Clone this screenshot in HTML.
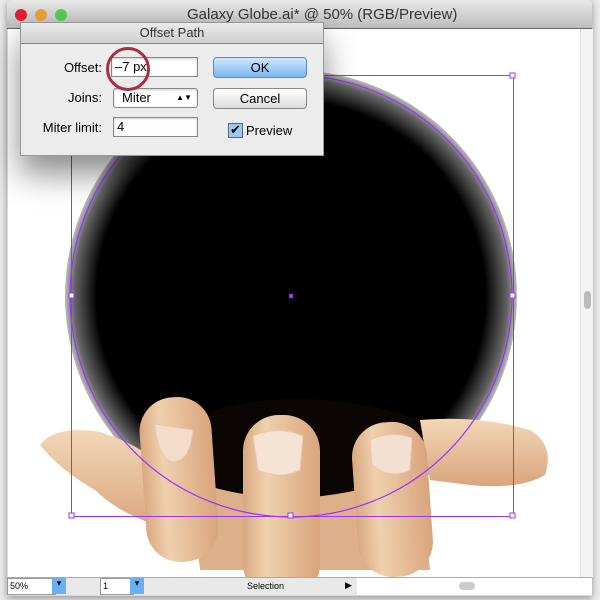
<!DOCTYPE html>
<html><head><style>
body{margin:0;width:600px;height:600px;background:#ececec;position:relative;overflow:hidden;font-family:"Liberation Sans",sans-serif}
.win{position:absolute;left:7px;top:0;width:585px;height:596px;background:#d8d8d8;box-shadow:0 2px 8px rgba(0,0,0,.4);border-radius:4px 4px 0 0}
.tb{position:absolute;left:0;top:0;width:585px;height:28px;background:linear-gradient(#e8e8e8,#bdbdbd);border-radius:4px 4px 0 0;border-bottom:1px solid #666}
.dot{position:absolute;top:9px;width:12px;height:12px;border-radius:50%}
.tt{position:absolute;left:180px;top:6px;font-size:15px;color:#333}
.canvas{position:absolute;left:8px;top:29px;width:572px;height:548px;background:#fff;overflow:hidden}
.sb{position:absolute;left:580px;top:29px;width:12px;height:548px;background:#f4f4f4;border-left:1px solid #ddd}
.status{position:absolute;left:7px;top:577px;width:585px;height:17px;background:#e8e8e8;border-top:1px solid #aaa;font-size:9px}
.dlg{position:absolute;left:20px;top:22px;width:302px;height:132px;background:#ececec;box-shadow:0 18px 30px rgba(0,0,0,.45);border:1px solid #999}
.dt{height:20px;background:linear-gradient(#eaeaea,#cfcfcf);border-bottom:1px solid #888;text-align:center;font-size:13px;line-height:20px;color:#333}
.lab{position:absolute;font-size:13px;color:#000;text-align:right;width:90px}
.inp{position:absolute;background:#fff;border:1px solid #888;font-size:13px;line-height:18px;padding-left:3px;box-shadow:inset 0 1px 2px rgba(0,0,0,.2)}
.btn{position:absolute;width:92px;height:19px;border:1px solid #888;border-radius:4px;background:linear-gradient(#fff,#ddd);font-size:13px;text-align:center;line-height:19px}
</style></head><body>
<div class="win">
<div class="tb">
<div class="dot" style="left:8px;background:#d23"></div>
<div class="dot" style="left:28px;background:#e9a23b"></div>
<div class="dot" style="left:48px;background:#5c5"></div>
<div class="tt">Galaxy Globe.ai* @ 50% (RGB/Preview)</div>
</div>
</div>
<div class="canvas">
<svg width="572" height="548" viewBox="8 29 572 548" style="position:absolute;left:0;top:0">
<defs>
<radialGradient id="g" cx="291" cy="296" r="226" gradientUnits="userSpaceOnUse">
<stop offset="0.86" stop-color="#000"/><stop offset="0.96" stop-color="#666"/><stop offset="1" stop-color="#bbb"/></radialGradient>
<linearGradient id="sk" x1="0" y1="0" x2="1" y2="0"><stop offset="0" stop-color="#d9a980"/><stop offset="0.3" stop-color="#f0d0ae"/><stop offset="1" stop-color="#d9a47c"/></linearGradient>
<linearGradient id="sk2" x1="0" y1="0" x2="0" y2="1"><stop offset="0" stop-color="#f3d7b7"/><stop offset="1" stop-color="#d9a57d"/></linearGradient>
</defs>
<circle cx="291" cy="296" r="226" fill="url(#g)"/>
<path d="M200 415 Q300 380 420 420 L430 500 L200 500Z" fill="#0b0603"/>
<path d="M40 445 Q55 425 100 432 Q140 445 160 465 L170 530 Q120 515 95 490 Q60 470 40 445Z" fill="url(#sk2)"/>
<path d="M420 420 Q480 415 530 430 Q555 445 545 475 Q520 490 470 485 L430 480Z" fill="url(#sk2)"/>
<path d="M190 480 Q300 520 420 470 L430 570 L200 570Z" fill="#deb08a"/>
<rect x="143" y="397" width="72" height="165" rx="34" fill="url(#sk)" transform="rotate(-4 179 480)"/>
<rect x="243" y="415" width="77" height="185" rx="36" fill="url(#sk)"/>
<rect x="355" y="422" width="75" height="155" rx="35" fill="url(#sk)" transform="rotate(-4 392 500)"/>
<path d="M155 424 L193 430 Q190 462 172 462 Q158 458 155 424Z" fill="#f3ddca" stroke="#e8c8b0"/>
<path d="M253 436 Q278 425 303 436 L300 470 Q280 480 258 470Z" fill="#f5e3d4" stroke="#e8c8b0"/>
<path d="M370 440 Q390 430 412 438 L410 470 Q390 480 372 465Z" fill="#f3e0d0" stroke="#e8c8b0"/>
<circle cx="291" cy="296" r="221" fill="none" stroke="#93f" stroke-width="1.2"/>
<rect x="71.5" y="75.5" width="442" height="441" fill="none" stroke="#93f"/>
<g fill="#fff" stroke="#93f"><rect x="69" y="73" width="5" height="5"/><rect x="510" y="73" width="5" height="5"/><rect x="69" y="293" width="5" height="5"/><rect x="510" y="293" width="5" height="5"/><rect x="69" y="513" width="5" height="5"/><rect x="288" y="513" width="5" height="5"/><rect x="510" y="513" width="5" height="5"/></g>
<rect x="289" y="294" width="4" height="4" fill="#93f"/>
</svg>
</div>
<div class="sb"><div style="position:absolute;left:3px;top:262px;width:7px;height:18px;border-radius:4px;background:#bbb"></div></div>
<div class="status">
<div style="position:absolute;left:0;top:0;width:45px;height:15px;background:#fff;border:1px solid #999;padding-left:2px;line-height:15px">50%</div>
<div style="position:absolute;left:45px;top:0;width:14px;height:16px;background:#6ab0f0;text-align:center">▾</div>
<div style="position:absolute;left:93px;top:0;width:30px;height:15px;background:#fff;border:1px solid #999;padding-left:2px;line-height:15px">1</div>
<div style="position:absolute;left:123px;top:0;width:14px;height:16px;background:#6ab0f0;text-align:center">▾</div>
<div style="position:absolute;left:240px;top:3px">Selection</div>
<div style="position:absolute;left:338px;top:2px">▶</div>
<div style="position:absolute;left:350px;top:0;width:235px;height:17px;background:#fff"><div style="position:absolute;left:102px;top:4px;width:16px;height:8px;border-radius:4px;background:#ccc"></div></div>
</div>
<div class="dlg">
<div class="dt">Offset Path</div>
<div class="lab" style="left:-9px;top:37px">Offset:</div>
<div class="inp" style="left:90px;top:34px;width:82px">–7 px</div>
<div class="lab" style="left:-9px;top:67px">Joins:</div>
<div class="inp" style="left:92px;top:65px;border-radius:3px;padding-left:8px;width:75px">Miter<span style="position:absolute;right:5px;font-size:8px">▲▼</span></div>
<div class="lab" style="left:-9px;top:97px">Miter limit:</div>
<div class="inp" style="left:92px;top:94px;width:80px">4</div>
<div class="btn" style="left:192px;top:34px;background:linear-gradient(#cfe6fd,#7bb6f0);border-color:#5a88c0">OK</div>
<div class="btn" style="left:192px;top:65px">Cancel</div>
<div style="position:absolute;left:207px;top:100px;width:13px;height:13px;background:#9cc8f2;border:1px solid #567;font-size:13px;line-height:12px;text-align:center">✔</div>
<div style="position:absolute;left:225px;top:100px;font-size:13px">Preview</div>
</div>
<div style="position:absolute;left:106px;top:47px;width:38px;height:38px;border:3px solid #a83040;border-radius:50%"></div>
</body></html>
